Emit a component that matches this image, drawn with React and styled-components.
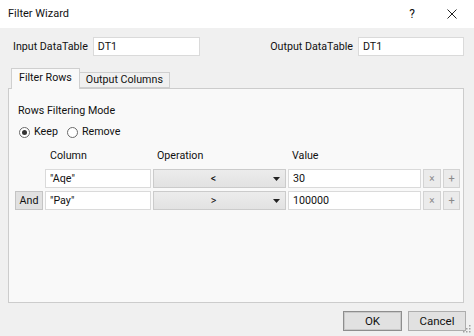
import React from "react";
import styled, { createGlobalStyle } from "styled-components";

const Global = createGlobalStyle`
  html, body { margin: 0; padding: 0; background: #f0f0f0; }
  * { box-sizing: border-box; }
  body { font-family: Roboto, "Open Sans", "Liberation Sans", sans-serif; font-size: 10.7px; color: #111; }
`;

const Window = styled.div`
  position: relative;
  width: 474px;
  height: 336px;
  display: flex;
  flex-direction: column;
  background: #f0f0f0;
  overflow: hidden;
`;

const TitleBar = styled.div`
  height: 28px;
  background: #fff;
  display: flex;
  align-items: center;
  padding-left: 8px;
  flex-shrink: 0;
`;

const Title = styled.div`
  flex: 1;
  line-height: 16px;
  font-size: 11px;
`;

const HelpButton = styled.div`
  flex-shrink: 0;
  width: 20px;
  height: 28px;
  display: flex;
  align-items: center;
  justify-content: center;
  font-size: 12px;
  color: #111;
  margin-right: 20px;
`;

const CloseButton = styled.div`
  flex-shrink: 0;
  width: 20px;
  height: 28px;
  display: flex;
  align-items: center;
  justify-content: center;
  margin-right: 12px;
`;

const Body = styled.div`
  flex: 1;
  display: flex;
  flex-direction: column;
  padding: 9px 10px 0 8px;
`;

const HeaderRow = styled.div`
  display: flex;
  align-items: center;
  height: 19px;
  padding-left: 5px;
`;

const FieldLabel = styled.span`
  line-height: 16px;
  margin-right: 5px;
`;

const TextBox = styled.div`
  width: ${(p) => (p.$w ? p.$w + "px" : "auto")};
  height: 19px;
  background: #fff;
  border: 1px solid #dadada;
  display: flex;
  align-items: center;
  padding-left: 4px;
  line-height: 16px;
  white-space: nowrap;
`;

const Spacer = styled.div`
  flex: 1;
`;

const TabStrip = styled.div`
  display: flex;
  align-items: flex-end;
  height: 20px;
  margin-top: 12px;
  padding-left: 3px;
  position: relative;
  z-index: 1;
`;

const Tab = styled.div`
  height: ${(p) => (p.$active ? 21 : 16)}px;
  margin-bottom: ${(p) => (p.$active ? -1 : 0)}px;
  padding: 0 ${(p) => (p.$active ? 7 : 6)}px;
  padding-bottom: ${(p) => (p.$active ? 2 : 0)}px;
  display: flex;
  align-items: center;
  background: ${(p) => (p.$active ? "#f9f9f9" : "#f0f0f0")};
  border: 1px solid #cfcfcf;
  border-bottom: ${(p) => (p.$active ? "none" : "1px solid #cfcfcf")};
  border-left: ${(p) => (p.$first ? "1px solid #cfcfcf" : "none")};
  line-height: 16px;
  white-space: nowrap;
`;

const Panel = styled.div`
  height: 215px;
  background: #f9f9f9;
  border: 1px solid #cccccc;
  display: flex;
  flex-direction: column;
  padding: 14px 0 0 9px;
`;

const SectionLabel = styled.div`
  line-height: 16px;
`;

const RadioRow = styled.div`
  display: flex;
  align-items: center;
  height: 16px;
  margin-top: 5px;
  padding-left: 1px;
`;

const RadioItem = styled.label`
  display: flex;
  align-items: center;
  margin-right: 9px;
  line-height: 16px;
`;

const RadioCircle = styled.span`
  width: 11px;
  height: 11px;
  border-radius: 50%;
  border: 1px solid #6a6a6a;
  background: #fff;
  display: inline-flex;
  align-items: center;
  justify-content: center;
  margin-right: 4px;
  &::after {
    content: "";
    width: 5px;
    height: 5px;
    border-radius: 50%;
    background: ${(p) => (p.$checked ? "#333" : "transparent")};
  }
`;

const Grid = styled.div`
  display: grid;
  grid-template-columns: 28px 106px 133px 133px 18px 17px;
  grid-template-rows: 18px 19px 19px;
  column-gap: 2px;
  row-gap: 3px;
  margin-top: 8px;
  margin-left: -3px;
`;

const HeaderCell = styled.div`
  padding-left: ${(p) => p.$pad || 0}px;
  line-height: 16px;
`;

const GridRow = styled.div`
  display: contents;
`;

const EmptyCell = styled.div``;

const AndButton = styled.div`
  background: #e1e1e1;
  border: 1px solid #c4c4c4;
  display: flex;
  align-items: center;
  justify-content: center;
  line-height: 16px;
`;

const Combo = styled.div`
  background: linear-gradient(#ececec, #e2e2e2);
  border: 1px solid #cbcbcb;
  display: flex;
  align-items: center;
`;

const ComboText = styled.div`
  flex: 1;
  text-align: center;
  line-height: 16px;
  padding-left: 4px;
`;

const ComboArrow = styled.div`
  width: 16px;
  display: flex;
  justify-content: center;
  align-items: center;
  padding-right: 2px;
`;

const SmallButton = styled.div`
  background: #ebebeb;
  border: 1px solid #d3d3d3;
  display: flex;
  align-items: center;
  justify-content: center;
  color: #8a8a8a;
  font-size: ${(p) => p.$size}px;
  line-height: 1;
`;

const Footer = styled.div`
  display: flex;
  justify-content: flex-end;
  gap: 6px;
  margin-top: 8px;
  margin-right: -2px;
`;

const DialogButton = styled.div`
  width: ${(p) => p.$w}px;
  height: 20px;
  background: #e1e1e1;
  border: 1px solid ${(p) => (p.$default ? "#8e8e8e" : "#adadad")};
  box-shadow: ${(p) => (p.$default ? "inset 0 0 0 1px #c9c9c9" : "none")};
  display: flex;
  align-items: center;
  justify-content: center;
  line-height: 16px;
  font-size: 11.5px;
`;

const Grip = styled.svg`
  position: absolute;
  right: 3px;
  bottom: 3px;
`;

const Arrow = () => (
  <svg width="7" height="4" viewBox="0 0 7 4">
    <path d="M0 0 H7 L3.5 4 Z" fill="#222" />
  </svg>
);

const CloseIcon = () => (
  <svg width="10" height="10" viewBox="0 0 10 10">
    <path d="M0.5 0.5 L9.5 9.5 M9.5 0.5 L0.5 9.5" stroke="#222" strokeWidth="1" />
  </svg>
);

const rows = [
  { and: false, col: '"Aqe"', op: "<", val: "30" },
  { and: true, col: '"Pay"', op: ">", val: "100000" },
];

export default function App() {
  return (
    <Window>
      <Global />
      <TitleBar>
        <Title>Filter Wizard</Title>
        <HelpButton>?</HelpButton>
        <CloseButton>
          <CloseIcon />
        </CloseButton>
      </TitleBar>
      <Body>
        <HeaderRow>
          <FieldLabel>Input DataTable</FieldLabel>
          <TextBox $w={107}>DT1</TextBox>
          <Spacer />
          <FieldLabel>Output DataTable</FieldLabel>
          <TextBox $w={106}>DT1</TextBox>
        </HeaderRow>
        <TabStrip>
          <Tab $active $first>Filter Rows</Tab>
          <Tab>Output Columns</Tab>
        </TabStrip>
        <Panel>
          <SectionLabel>Rows Filtering Mode</SectionLabel>
          <RadioRow>
            <RadioItem>
              <RadioCircle $checked />
              Keep
            </RadioItem>
            <RadioItem>
              <RadioCircle />
              Remove
            </RadioItem>
          </RadioRow>
          <Grid>
            <GridRow>
              <EmptyCell />
              <HeaderCell $pad={5}>Column</HeaderCell>
              <HeaderCell $pad={4}>Operation</HeaderCell>
              <HeaderCell $pad={4}>Value</HeaderCell>
              <EmptyCell />
              <EmptyCell />
            </GridRow>
            {rows.map((r, i) => (
              <GridRow key={i}>
                {r.and ? <AndButton>And</AndButton> : <EmptyCell />}
                <TextBox>{r.col}</TextBox>
                <Combo>
                  <ComboText>{r.op}</ComboText>
                  <ComboArrow>
                    <Arrow />
                  </ComboArrow>
                </Combo>
                <TextBox>{r.val}</TextBox>
                <SmallButton $size={10}>×</SmallButton>
                <SmallButton $size={11}>+</SmallButton>
              </GridRow>
            ))}
          </Grid>
        </Panel>
        <Footer>
          <DialogButton $w={59} $default>OK</DialogButton>
          <DialogButton $w={58}>Cancel</DialogButton>
        </Footer>
      </Body>
      <Grip width="8" height="8" viewBox="0 0 8 8">
        {[
          [6, 0],
          [6, 3],
          [3, 3],
          [6, 6],
          [3, 6],
          [0, 6],
        ].map(([x, y], i) => (
          <rect key={i} x={x} y={y} width="1.5" height="1.5" fill="#a0a0a0" />
        ))}
      </Grip>
    </Window>
  );
}
